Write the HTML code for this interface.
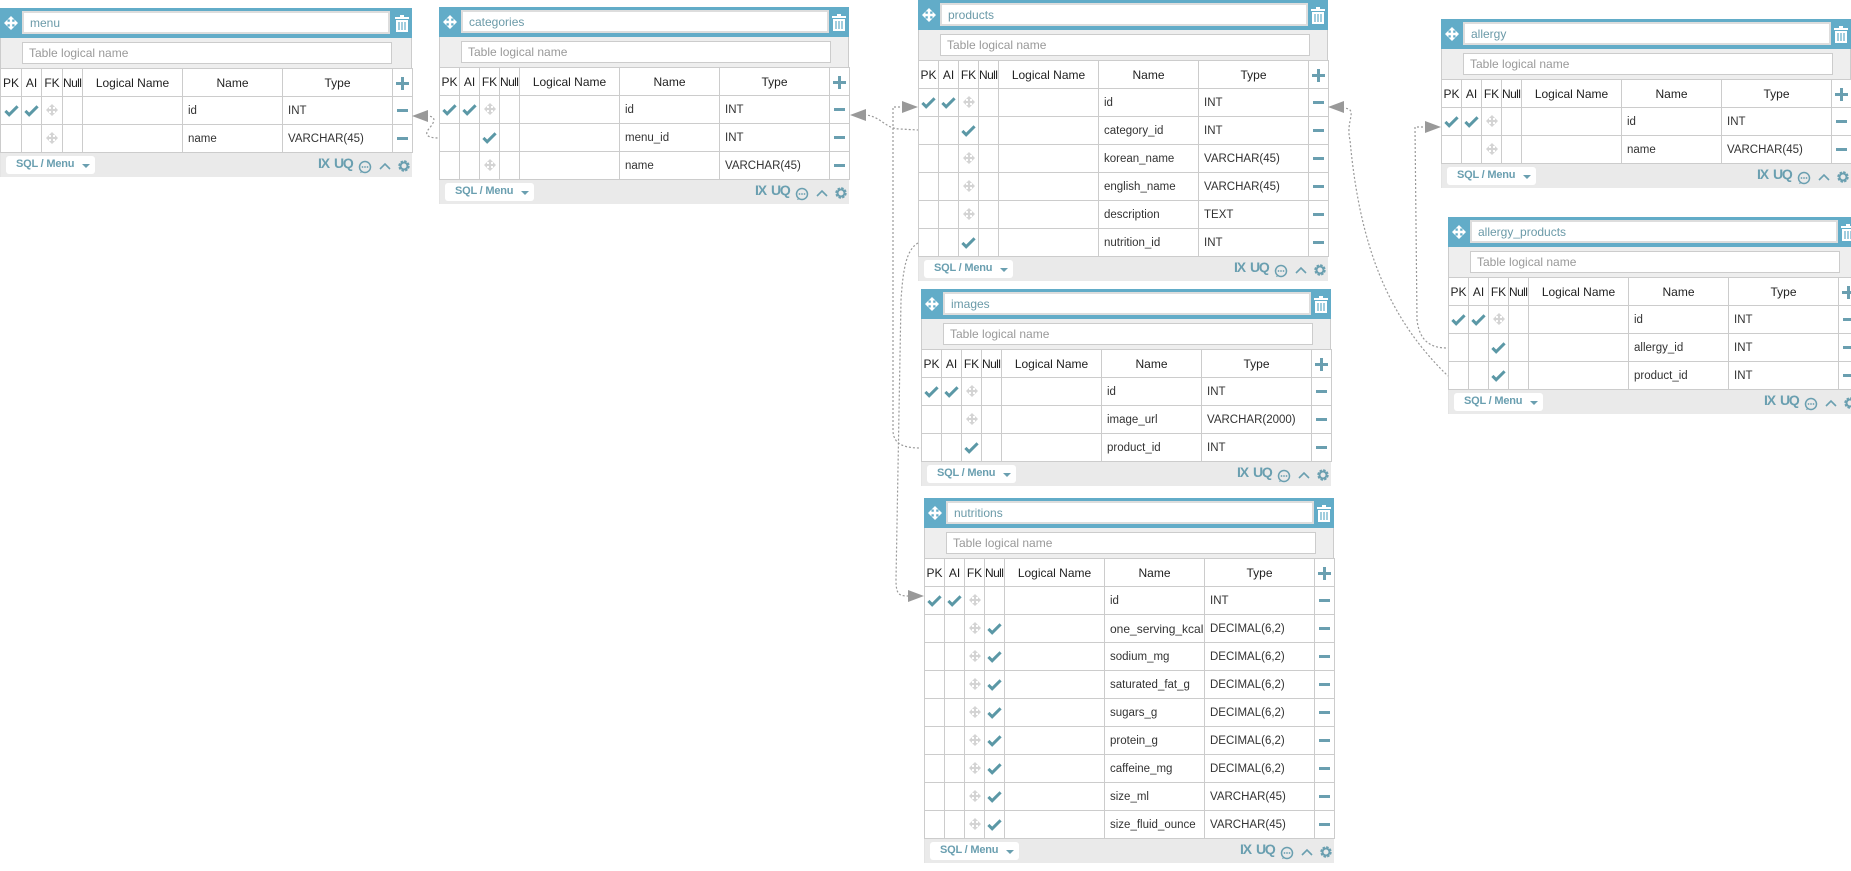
<!DOCTYPE html>
<html><head><meta charset="utf-8"><style>
*{box-sizing:border-box;margin:0;padding:0}
body{width:1851px;height:871px;background:#fff;position:relative;overflow:hidden;font-family:"Liberation Sans",Arial,sans-serif;color:#333}
.t{position:absolute;width:410px;background:#eee}
.hd{height:30px;background:#62acc8;position:relative}
.hd .nm{position:absolute;left:22px;top:3px;width:368px;height:23px;background:#fff;border:2px solid #ddd;font-size:12px;color:#6b9aa8;padding:3px 6px;line-height:15px}
.hd .mv{position:absolute;left:4px;top:8px;width:14px;height:14px;fill:#fff}
.hd .tr{position:absolute;right:2px;top:6px;width:16px;height:18px}
.lg{height:30px;position:relative;border-left:1px solid #ccc;border-right:1px solid #ccc}
.lg div{position:absolute;left:21px;top:4px;width:370px;height:22px;background:#fff;border:1px solid #ccc;font-size:12px;color:#999;padding:3px 6px}
table{border-collapse:collapse;width:410px;table-layout:fixed;background:#fff}
td,th{border:1px solid #ccc;height:28px;padding:0;font-size:11.5px;white-space:nowrap;overflow:hidden}
th{font-weight:normal;font-size:12px;color:#222;text-align:center}
th.n{letter-spacing:-0.6px;overflow:visible;text-align:left}
td.x{padding-left:5px}
td.c{text-align:center}
.k{width:15px;height:13px;vertical-align:middle;fill:none;stroke:#5b98a6;stroke-width:3.2}
.f{width:12px;height:12px;vertical-align:middle;fill:#d4d4d4}
.mi{display:inline-block;width:11px;height:3px;background:#6a9fb0;vertical-align:middle}
.pl{width:13px;height:13px;vertical-align:middle;fill:#6a9fb0}
.ft{height:24px;background:#eaeaea;position:relative;border-left:1px solid #e4e4e4}
.sql{position:absolute;left:5px;top:3px;width:89px;height:18px;background:#fff;border-radius:3px;font-size:11px;font-weight:bold;color:#6a9fb0;padding:2px 0 0 10px;letter-spacing:-0.2px}
.sql:after{content:"";position:absolute;left:76px;top:8px;border:4px solid transparent;border-top:4px solid #6a9fb0}
.ic{position:absolute;left:315px;top:3px;height:18px;width:95px}
.ic b{position:absolute;top:-1px;font-size:14px;color:#6a9fb0;letter-spacing:-1.2px}
.ic svg{position:absolute}
.arr{fill:#999}
.ln{fill:none;stroke:#999;stroke-width:1.2;stroke-dasharray:2 2}
</style></head><body>
<svg width="0" height="0" style="position:absolute">
<defs>
<symbol id="mv" viewBox="0 0 14 14"><path d="M7 0L10.5 3.5H8.2V5.8H10.5V3.5L14 7L10.5 10.5V8.2H8.2V10.5H10.5L7 14L3.5 10.5H5.8V8.2H3.5V10.5L0 7L3.5 3.5V5.8H5.8V3.5H3.5Z"/></symbol>
<symbol id="ck" viewBox="0 0 16 13"><path d="M1.5 7L5.5 11L14.5 2"/></symbol>
<symbol id="tr" viewBox="0 0 16 18"><path fill="#fff" d="M1 3h14v2H1zM6 1h4v2H6zM2 6h12v12H2z"/><path d="M5 8v8M8 8v8M11 8v8" stroke="#62acc8" stroke-width="1.2"/></symbol>
<symbol id="pl" viewBox="0 0 13 13"><path d="M5 0h3v5h5v3H8v5H5V8H0V5h5z"/></symbol>
<symbol id="ics" viewBox="0 0 95 18">
<circle cx="47" cy="11" r="5.5" fill="none" stroke="#6a9fb0" stroke-width="1.5"/><path d="M43 15l-1 2 3-1" fill="#6a9fb0"/><circle cx="44.5" cy="11" r=".9" fill="#6a9fb0"/><circle cx="47" cy="11" r=".9" fill="#6a9fb0"/><circle cx="49.5" cy="11" r=".9" fill="#6a9fb0"/>
<path d="M62 13l5-5 5 5" fill="none" stroke="#6a9fb0" stroke-width="1.6"/>
<circle cx="86" cy="10" r="4.2" fill="none" stroke="#6a9fb0" stroke-width="3" stroke-dasharray="2.2 1.1"/><circle cx="86" cy="10" r="3.5" fill="none" stroke="#6a9fb0" stroke-width="2"/>
</symbol>
</defs></svg>

<svg style="position:absolute;left:0;top:0;z-index:5" width="1851" height="871">
<path class="ln" d="M426 116 C440 116 432 125 428 130 C424 136 430 138 439 138"/>
<polygon class="arr" points="412,116 428,110 428,122"/>
<path class="ln" d="M864 115 C880 115 885 129 900 129 L918 130"/>
<polygon class="arr" points="850,115 866,109 866,121"/>
<path class="ln" d="M904 107 L893 107 L893 430 C893 445 905 448 921 448"/>
<polygon class="arr" points="918,107 902,101 902,113"/>
<path class="ln" d="M918 243 C906 250 903 270 901 300 L896 580 C896 596 900 596 910 596"/>
<polygon class="arr" points="924,596 908,590 908,602"/>
<path class="ln" d="M1427 127 L1415 127 L1417 320 C1420 345 1435 348 1448 348"/>
<polygon class="arr" points="1441,127 1425,121 1425,133"/>
<path class="ln" d="M1342 108 C1360 108 1345 120 1350 140 C1360 250 1390 320 1448 376"/>
<polygon class="arr" points="1328,107 1344,101 1344,113"/>
</svg>

<!-- menu -->
<div class="t" style="left:0;top:8px;width:412px">
<div class="hd"><svg class="mv"><use href="#mv"/></svg><div class="nm">menu</div><svg class="tr"><use href="#tr"/></svg></div>
<div class="lg"><div>Table logical name</div></div>
<table style="width:412px"><colgroup><col style="width:21px"><col style="width:20px"><col style="width:21px"><col style="width:20px"><col style="width:100px"><col style="width:100px"><col style="width:110px"><col style="width:20px"></colgroup>
<tr><th>PK</th><th>AI</th><th>FK</th><th class="n">Null</th><th>Logical Name</th><th>Name</th><th>Type</th><th><svg class="pl"><use href="#pl"/></svg></th></tr>
<tr><td class="c"><svg class="k"><use href="#ck"/></svg></td><td class="c"><svg class="k"><use href="#ck"/></svg></td><td class="c"><svg class="f"><use href="#mv"/></svg></td><td></td><td></td><td class="x">id</td><td class="x">INT</td><td class="c"><i class="mi"></i></td></tr>
<tr><td></td><td></td><td class="c"><svg class="f"><use href="#mv"/></svg></td><td></td><td></td><td class="x">name</td><td class="x">VARCHAR(45)</td><td class="c"><i class="mi"></i></td></tr>
</table>
<div class="ft"><div class="sql">SQL / Menu</div><div class="ic" style="left:317px"><b style="left:0">IX</b><b style="left:16px">UQ</b><svg width="95" height="18"><use href="#ics"/></svg></div></div>
</div>

<!-- categories -->
<div class="t" style="left:439px;top:7px">
<div class="hd"><svg class="mv"><use href="#mv"/></svg><div class="nm">categories</div><svg class="tr"><use href="#tr"/></svg></div>
<div class="lg"><div>Table logical name</div></div>
<table><colgroup><col style="width:20px"><col style="width:20px"><col style="width:20px"><col style="width:20px"><col style="width:100px"><col style="width:100px"><col style="width:110px"><col style="width:20px"></colgroup>
<tr><th>PK</th><th>AI</th><th>FK</th><th class="n">Null</th><th>Logical Name</th><th>Name</th><th>Type</th><th><svg class="pl"><use href="#pl"/></svg></th></tr>
<tr><td class="c"><svg class="k"><use href="#ck"/></svg></td><td class="c"><svg class="k"><use href="#ck"/></svg></td><td class="c"><svg class="f"><use href="#mv"/></svg></td><td></td><td></td><td class="x">id</td><td class="x">INT</td><td class="c"><i class="mi"></i></td></tr>
<tr><td></td><td></td><td class="c"><svg class="k"><use href="#ck"/></svg></td><td></td><td></td><td class="x">menu_id</td><td class="x">INT</td><td class="c"><i class="mi"></i></td></tr>
<tr><td></td><td></td><td class="c"><svg class="f"><use href="#mv"/></svg></td><td></td><td></td><td class="x">name</td><td class="x">VARCHAR(45)</td><td class="c"><i class="mi"></i></td></tr>
</table>
<div class="ft"><div class="sql">SQL / Menu</div><div class="ic"><b style="left:0">IX</b><b style="left:16px">UQ</b><svg width="95" height="18"><use href="#ics"/></svg></div></div>
</div>

<!-- products -->
<div class="t" style="left:918px;top:0">
<div class="hd"><svg class="mv"><use href="#mv"/></svg><div class="nm">products</div><svg class="tr"><use href="#tr"/></svg></div>
<div class="lg"><div>Table logical name</div></div>
<table><colgroup><col style="width:20px"><col style="width:20px"><col style="width:20px"><col style="width:20px"><col style="width:100px"><col style="width:100px"><col style="width:110px"><col style="width:20px"></colgroup>
<tr><th>PK</th><th>AI</th><th>FK</th><th class="n">Null</th><th>Logical Name</th><th>Name</th><th>Type</th><th><svg class="pl"><use href="#pl"/></svg></th></tr>
<tr><td class="c"><svg class="k"><use href="#ck"/></svg></td><td class="c"><svg class="k"><use href="#ck"/></svg></td><td class="c"><svg class="f"><use href="#mv"/></svg></td><td></td><td></td><td class="x">id</td><td class="x">INT</td><td class="c"><i class="mi"></i></td></tr>
<tr><td></td><td></td><td class="c"><svg class="k"><use href="#ck"/></svg></td><td></td><td></td><td class="x">category_id</td><td class="x">INT</td><td class="c"><i class="mi"></i></td></tr>
<tr><td></td><td></td><td class="c"><svg class="f"><use href="#mv"/></svg></td><td></td><td></td><td class="x">korean_name</td><td class="x">VARCHAR(45)</td><td class="c"><i class="mi"></i></td></tr>
<tr><td></td><td></td><td class="c"><svg class="f"><use href="#mv"/></svg></td><td></td><td></td><td class="x">english_name</td><td class="x">VARCHAR(45)</td><td class="c"><i class="mi"></i></td></tr>
<tr><td></td><td></td><td class="c"><svg class="f"><use href="#mv"/></svg></td><td></td><td></td><td class="x">description</td><td class="x">TEXT</td><td class="c"><i class="mi"></i></td></tr>
<tr><td></td><td></td><td class="c"><svg class="k"><use href="#ck"/></svg></td><td></td><td></td><td class="x">nutrition_id</td><td class="x">INT</td><td class="c"><i class="mi"></i></td></tr>
</table>
<div class="ft"><div class="sql">SQL / Menu</div><div class="ic"><b style="left:0">IX</b><b style="left:16px">UQ</b><svg width="95" height="18"><use href="#ics"/></svg></div></div>
</div>

<!-- images -->
<div class="t" style="left:921px;top:289px">
<div class="hd"><svg class="mv"><use href="#mv"/></svg><div class="nm">images</div><svg class="tr"><use href="#tr"/></svg></div>
<div class="lg"><div>Table logical name</div></div>
<table><colgroup><col style="width:20px"><col style="width:20px"><col style="width:20px"><col style="width:20px"><col style="width:100px"><col style="width:100px"><col style="width:110px"><col style="width:20px"></colgroup>
<tr><th>PK</th><th>AI</th><th>FK</th><th class="n">Null</th><th>Logical Name</th><th>Name</th><th>Type</th><th><svg class="pl"><use href="#pl"/></svg></th></tr>
<tr><td class="c"><svg class="k"><use href="#ck"/></svg></td><td class="c"><svg class="k"><use href="#ck"/></svg></td><td class="c"><svg class="f"><use href="#mv"/></svg></td><td></td><td></td><td class="x">id</td><td class="x">INT</td><td class="c"><i class="mi"></i></td></tr>
<tr><td></td><td></td><td class="c"><svg class="f"><use href="#mv"/></svg></td><td></td><td></td><td class="x">image_url</td><td class="x">VARCHAR(2000)</td><td class="c"><i class="mi"></i></td></tr>
<tr><td></td><td></td><td class="c"><svg class="k"><use href="#ck"/></svg></td><td></td><td></td><td class="x">product_id</td><td class="x">INT</td><td class="c"><i class="mi"></i></td></tr>
</table>
<div class="ft"><div class="sql">SQL / Menu</div><div class="ic"><b style="left:0">IX</b><b style="left:16px">UQ</b><svg width="95" height="18"><use href="#ics"/></svg></div></div>
</div>

<!-- nutritions -->
<div class="t" style="left:924px;top:498px">
<div class="hd"><svg class="mv"><use href="#mv"/></svg><div class="nm">nutritions</div><svg class="tr"><use href="#tr"/></svg></div>
<div class="lg"><div>Table logical name</div></div>
<table><colgroup><col style="width:20px"><col style="width:20px"><col style="width:20px"><col style="width:20px"><col style="width:100px"><col style="width:100px"><col style="width:110px"><col style="width:20px"></colgroup>
<tr><th>PK</th><th>AI</th><th>FK</th><th class="n">Null</th><th>Logical Name</th><th>Name</th><th>Type</th><th><svg class="pl"><use href="#pl"/></svg></th></tr>
<tr><td class="c"><svg class="k"><use href="#ck"/></svg></td><td class="c"><svg class="k"><use href="#ck"/></svg></td><td class="c"><svg class="f"><use href="#mv"/></svg></td><td></td><td></td><td class="x">id</td><td class="x">INT</td><td class="c"><i class="mi"></i></td></tr>
<tr><td></td><td></td><td class="c"><svg class="f"><use href="#mv"/></svg></td><td class="c"><svg class="k"><use href="#ck"/></svg></td><td></td><td class="x" style="font-size:12px">one_serving_kcal</td><td class="x">DECIMAL(6,2)</td><td class="c"><i class="mi"></i></td></tr>
<tr><td></td><td></td><td class="c"><svg class="f"><use href="#mv"/></svg></td><td class="c"><svg class="k"><use href="#ck"/></svg></td><td></td><td class="x">sodium_mg</td><td class="x">DECIMAL(6,2)</td><td class="c"><i class="mi"></i></td></tr>
<tr><td></td><td></td><td class="c"><svg class="f"><use href="#mv"/></svg></td><td class="c"><svg class="k"><use href="#ck"/></svg></td><td></td><td class="x">saturated_fat_g</td><td class="x">DECIMAL(6,2)</td><td class="c"><i class="mi"></i></td></tr>
<tr><td></td><td></td><td class="c"><svg class="f"><use href="#mv"/></svg></td><td class="c"><svg class="k"><use href="#ck"/></svg></td><td></td><td class="x">sugars_g</td><td class="x">DECIMAL(6,2)</td><td class="c"><i class="mi"></i></td></tr>
<tr><td></td><td></td><td class="c"><svg class="f"><use href="#mv"/></svg></td><td class="c"><svg class="k"><use href="#ck"/></svg></td><td></td><td class="x">protein_g</td><td class="x">DECIMAL(6,2)</td><td class="c"><i class="mi"></i></td></tr>
<tr><td></td><td></td><td class="c"><svg class="f"><use href="#mv"/></svg></td><td class="c"><svg class="k"><use href="#ck"/></svg></td><td></td><td class="x">caffeine_mg</td><td class="x">DECIMAL(6,2)</td><td class="c"><i class="mi"></i></td></tr>
<tr><td></td><td></td><td class="c"><svg class="f"><use href="#mv"/></svg></td><td class="c"><svg class="k"><use href="#ck"/></svg></td><td></td><td class="x">size_ml</td><td class="x">VARCHAR(45)</td><td class="c"><i class="mi"></i></td></tr>
<tr><td></td><td></td><td class="c"><svg class="f"><use href="#mv"/></svg></td><td class="c"><svg class="k"><use href="#ck"/></svg></td><td></td><td class="x">size_fluid_ounce</td><td class="x">VARCHAR(45)</td><td class="c"><i class="mi"></i></td></tr>
</table>
<div class="ft"><div class="sql">SQL / Menu</div><div class="ic"><b style="left:0">IX</b><b style="left:16px">UQ</b><svg width="95" height="18"><use href="#ics"/></svg></div></div>
</div>

<!-- allergy -->
<div class="t" style="left:1441px;top:19px">
<div class="hd"><svg class="mv"><use href="#mv"/></svg><div class="nm">allergy</div><svg class="tr"><use href="#tr"/></svg></div>
<div class="lg"><div>Table logical name</div></div>
<table><colgroup><col style="width:20px"><col style="width:20px"><col style="width:20px"><col style="width:20px"><col style="width:100px"><col style="width:100px"><col style="width:110px"><col style="width:20px"></colgroup>
<tr><th>PK</th><th>AI</th><th>FK</th><th class="n">Null</th><th>Logical Name</th><th>Name</th><th>Type</th><th><svg class="pl"><use href="#pl"/></svg></th></tr>
<tr><td class="c"><svg class="k"><use href="#ck"/></svg></td><td class="c"><svg class="k"><use href="#ck"/></svg></td><td class="c"><svg class="f"><use href="#mv"/></svg></td><td></td><td></td><td class="x">id</td><td class="x">INT</td><td class="c"><i class="mi"></i></td></tr>
<tr><td></td><td></td><td class="c"><svg class="f"><use href="#mv"/></svg></td><td></td><td></td><td class="x">name</td><td class="x">VARCHAR(45)</td><td class="c"><i class="mi"></i></td></tr>
</table>
<div class="ft"><div class="sql">SQL / Menu</div><div class="ic"><b style="left:0">IX</b><b style="left:16px">UQ</b><svg width="95" height="18"><use href="#ics"/></svg></div></div>
</div>

<!-- allergy_products -->
<div class="t" style="left:1448px;top:217px">
<div class="hd"><svg class="mv"><use href="#mv"/></svg><div class="nm">allergy_products</div><svg class="tr"><use href="#tr"/></svg></div>
<div class="lg"><div>Table logical name</div></div>
<table><colgroup><col style="width:20px"><col style="width:20px"><col style="width:20px"><col style="width:20px"><col style="width:100px"><col style="width:100px"><col style="width:110px"><col style="width:20px"></colgroup>
<tr><th>PK</th><th>AI</th><th>FK</th><th class="n">Null</th><th>Logical Name</th><th>Name</th><th>Type</th><th><svg class="pl"><use href="#pl"/></svg></th></tr>
<tr><td class="c"><svg class="k"><use href="#ck"/></svg></td><td class="c"><svg class="k"><use href="#ck"/></svg></td><td class="c"><svg class="f"><use href="#mv"/></svg></td><td></td><td></td><td class="x">id</td><td class="x">INT</td><td class="c"><i class="mi"></i></td></tr>
<tr><td></td><td></td><td class="c"><svg class="k"><use href="#ck"/></svg></td><td></td><td></td><td class="x">allergy_id</td><td class="x">INT</td><td class="c"><i class="mi"></i></td></tr>
<tr><td></td><td></td><td class="c"><svg class="k"><use href="#ck"/></svg></td><td></td><td></td><td class="x">product_id</td><td class="x">INT</td><td class="c"><i class="mi"></i></td></tr>
</table>
<div class="ft"><div class="sql">SQL / Menu</div><div class="ic"><b style="left:0">IX</b><b style="left:16px">UQ</b><svg width="95" height="18"><use href="#ics"/></svg></div></div>
</div>
</body></html>
